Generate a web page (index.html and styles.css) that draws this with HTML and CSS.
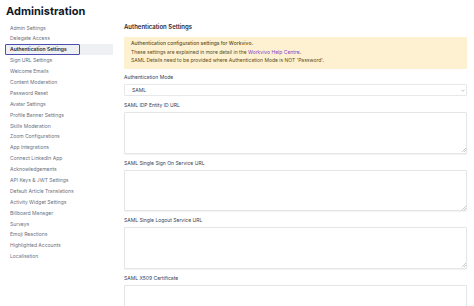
FILE: index.html
```html
<!DOCTYPE html>
<html lang="en">
<head>
  <title>Administration</title>
  <link rel="stylesheet" href="styles.css">
</head>
<body>

  <div class="page">
    <h1>Administration</h1>

    <div class="layout">
      <!-- Sidebar -->
      <ul class="menu">
        <li><a href="#">Admin Settings</a></li>
        <li><a href="#">Delegate Access</a></li>
        <li class="active"><a href="#">Authentication Settings</a></li>
        <li><a href="#">Sign URL Settings</a></li>
        <li><a href="#">Welcome Emails</a></li>
        <li><a href="#">Content Moderation</a></li>
        <li><a href="#">Password Reset</a></li>
        <li><a href="#">Avatar Settings</a></li>
        <li><a href="#">Profile Banner Settings</a></li>
        <li><a href="#">Skills Moderation</a></li>
        <li><a href="#">Zoom Configurations</a></li>
        <li><a href="#">App Integrations</a></li>
        <li><a href="#">Connect LinkedIn App</a></li>
        <li><a href="#">Acknowledgements</a></li>
        <li><a href="#">API Keys &amp; JWT Settings</a></li>
        <li><a href="#">Default Article Translations</a></li>
        <li><a href="#">Activity Widget Settings</a></li>
        <li><a href="#">Billboard Manager</a></li>
        <li><a href="#">Surveys</a></li>
        <li><a href="#">Emoji Reactions</a></li>
        <li><a href="#">Highlighted Accounts</a></li>
        <li><a href="#">Localisation</a></li>
      </ul>

      <!-- Settings form -->
      <div class="main">
        <h2>Authentication Settings</h2>

        <div class="alert">
          <p class="alert-title">Authentication configuration settings for Workvivo.</p>
          <p>These settings are explained in more detail in the <a href="#">Workvivo Help Centre</a>.</p>
          <p>SAML Details need to be provided where Authentication Mode is NOT 'Password'.</p>
        </div>

        <div class="field">
          <label for="mode">Authentication Mode</label>
          <div class="control">
            <select id="mode">
              <option>SAML</option>
              <option>Password</option>
            </select>
            <svg class="chevron" width="4" height="3" viewBox="0 0 10 6">
              <path d="M1 1l4 4 4-4" fill="none" stroke="#9ca3af" stroke-width="1.6"/>
            </svg>
          </div>
        </div>

        <div class="field">
          <label for="idp">SAML IDP Entity ID URL</label>
          <div class="control">
            <textarea id="idp"></textarea>
            <svg class="grip" width="4" height="4" viewBox="0 0 4 4">
              <path d="M4 0L0 4M4 2L2 4" stroke="#a3a7ad" stroke-width="0.6"/>
            </svg>
          </div>
        </div>

        <div class="field">
          <label for="sso">SAML Single Sign On Service URL</label>
          <div class="control">
            <textarea id="sso"></textarea>
            <svg class="grip" width="4" height="4" viewBox="0 0 4 4">
              <path d="M4 0L0 4M4 2L2 4" stroke="#a3a7ad" stroke-width="0.6"/>
            </svg>
          </div>
        </div>

        <div class="field">
          <label for="slo">SAML Single Logout Service URL</label>
          <div class="control">
            <textarea id="slo"></textarea>
            <svg class="grip" width="4" height="4" viewBox="0 0 4 4">
              <path d="M4 0L0 4M4 2L2 4" stroke="#a3a7ad" stroke-width="0.6"/>
            </svg>
          </div>
        </div>

        <div class="field">
          <label for="cert">SAML X509 Certificate</label>
          <div class="control">
            <textarea id="cert"></textarea>
            <svg class="grip" width="4" height="4" viewBox="0 0 4 4">
              <path d="M4 0L0 4M4 2L2 4" stroke="#a3a7ad" stroke-width="0.6"/>
            </svg>
          </div>
        </div>
      </div>
    </div>
  </div>

</body>
</html>
```

FILE: styles.css
```css
* {
  box-sizing: border-box;
  margin: 0;
  padding: 0;
}

body {
  font-family: "Inter", "Liberation Sans", sans-serif;
  background: white;
  color: #374151;
  overflow: hidden;
}

.page {
  padding: 0 7px 0 5px;
}

h1 {
  font-size: 11px;
  font-weight: 700;
  line-height: 16px;
  color: #111827;
  margin: 2.5px 0 0 1px;
}

.layout {
  display: flex;
  gap: 11px;
}

/* Sidebar */
.menu {
  list-style: none;
  width: 108px;
  flex-shrink: 0;
  padding-top: 4px;
}

.menu li {
  line-height: 10.9px;
  height: 10.9px;
  font-size: 5px;
}

.menu a {
  color: #6b7280;
  text-decoration: none;
  padding-left: 5px;
}

.menu li.active {
  background: #eef0f3;
  display: flex;
  align-items: center;
}

.menu li.active a {
  display: inline-block;
  width: 75px;
  line-height: 9.5px;
  padding-left: 4px;
  border: 1px solid #4a4fb0;
  border-radius: 1px;
  color: #1f2937;
  font-weight: 600;
}

/* Main column */
.main {
  flex: 1;
  padding-top: 4.5px;
}

h2 {
  font-size: 6px;
  font-weight: 600;
  line-height: 8px;
  color: #1f2937;
  margin-bottom: 6px;
}

.alert {
  background: #fdf1d2;
  border-radius: 1px;
  padding: 3.2px 7px 4.8px;
  font-size: 5px;
  line-height: 7.5px;
  color: #5f4c17;
}

.alert-title {
  font-weight: 500;
  margin-bottom: 1.5px;
}

.alert a {
  color: #8b3fc9;
  text-decoration: none;
}

.field {
  margin-top: 4px;
}

.field + .field {
  margin-top: 5px;
}

.field label {
  display: block;
  font-size: 5px;
  line-height: 8px;
  color: #374151;
  margin-bottom: 3px;
}

.control {
  position: relative;
}

select {
  display: block;
  appearance: none;
  width: 100%;
  height: 12.5px;
  font-family: inherit;
  font-size: 5px;
  color: #374151;
  padding: 0 7px;
  border: 1px solid #e6e8eb;
  border-radius: 1px;
  background: white;
  outline: none;
}

.chevron {
  position: absolute;
  right: 2.5px;
  top: 5px;
}

textarea {
  display: block;
  width: 100%;
  height: 41.5px;
  font-family: inherit;
  font-size: 5px;
  border: 1px solid #e3e5e9;
  border-radius: 1px;
  background: white;
  resize: none;
  box-shadow: 0 0.5px 1px rgba(0, 0, 0, 0.05);
}

.grip {
  position: absolute;
  right: 1.5px;
  bottom: 1.5px;
}
```
